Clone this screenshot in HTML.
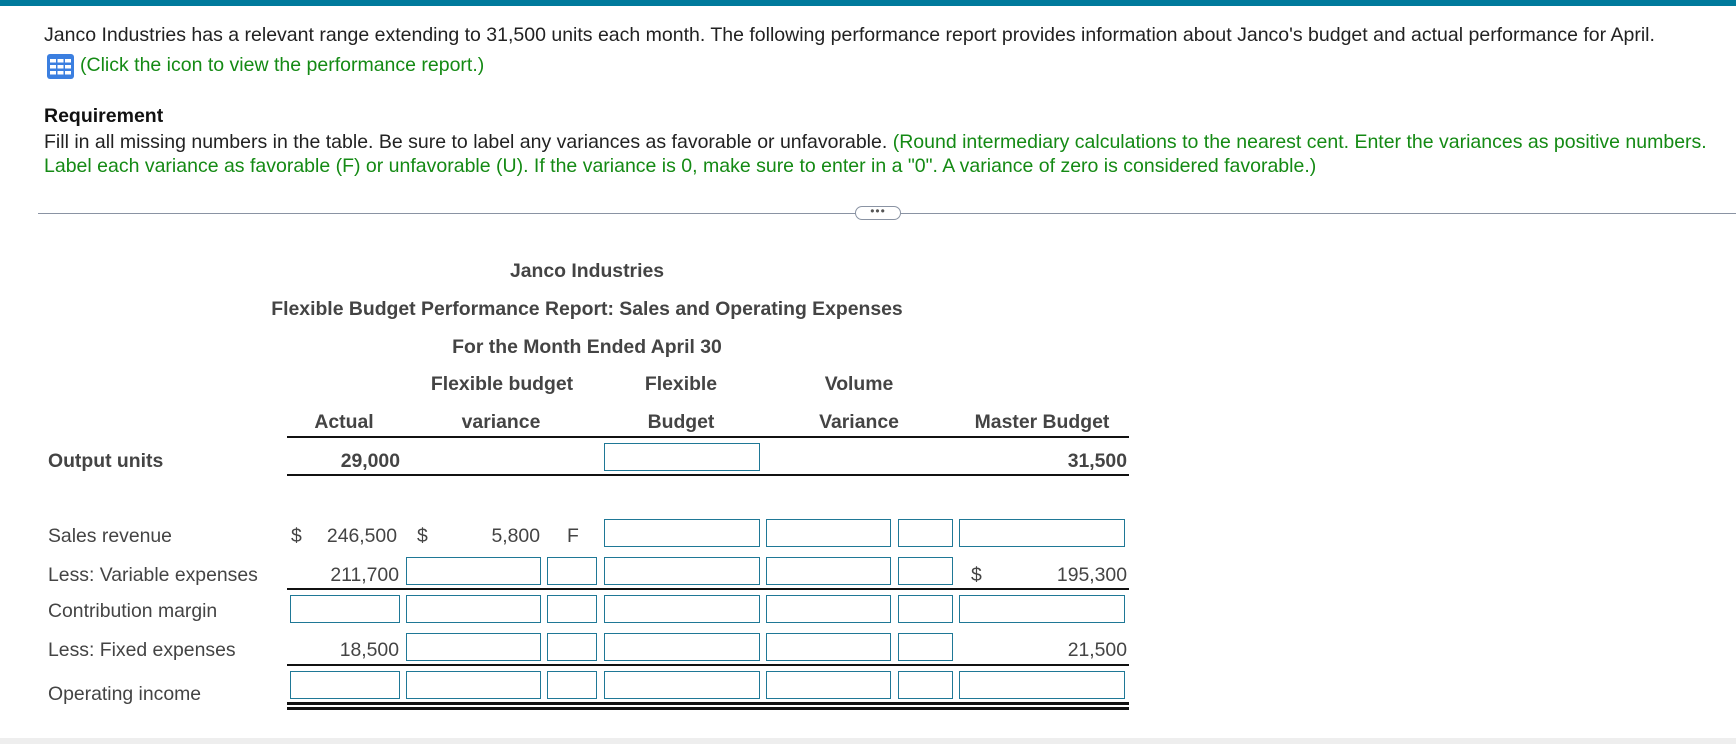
<!DOCTYPE html>
<html><head><meta charset="utf-8"><style>
body{margin:0;width:1736px;height:744px;position:relative;overflow:hidden;background:#fff;font-family:"Liberation Sans",Arial,sans-serif;color:#222;}
.a{position:absolute;white-space:nowrap;line-height:1;}
.g{color:#148a14;}
.b{font-weight:bold;color:#333;}
.c{transform:translateX(-50%);}
.r{transform:translateX(-100%);}
.bx{position:absolute;border:1px solid #1f7896;background:#fff;box-sizing:border-box;}
.ln{position:absolute;left:287px;width:842px;height:2px;background:#111;}
.t{font-size:19.5px;}
.m{font-size:19.4px;color:#444;}
</style></head><body>
<div style="position:absolute;left:0;top:0;width:1736px;height:6px;background:#007a9c"></div>
<div style="position:absolute;left:0;top:738px;width:1736px;height:6px;background:#eeeeee"></div>

<div class="a t" style="left:44px;top:26px">Janco Industries has a relevant range extending to 31,500 units each month. The following performance report provides information about Janco's budget and actual performance for April.</div>
<svg style="position:absolute;left:47px;top:54px" width="27" height="25" viewBox="0 0 27 25"><rect x="0" y="0" width="27" height="25" rx="3" fill="#3b7fe0"/><g fill="#fff"><rect x="3" y="5" width="6" height="3.5"/><rect x="10.5" y="5" width="6" height="3.5"/><rect x="18" y="5" width="6" height="3.5"/><rect x="3" y="11" width="6" height="3.5"/><rect x="10.5" y="11" width="6" height="3.5"/><rect x="18" y="11" width="6" height="3.5"/><rect x="3" y="17" width="6" height="3.5"/><rect x="10.5" y="17" width="6" height="3.5"/><rect x="18" y="17" width="6" height="3.5"/></g></svg>
<div class="a t g" style="left:80px;top:56px">(Click the icon to view the performance report.)</div>

<div class="a t" style="left:44px;top:107px;font-weight:bold;color:#111">Requirement</div>
<div class="a t" style="left:44px;top:133px">Fill in all missing numbers in the table. Be sure to label any variances as favorable or unfavorable. <span class="g">(Round intermediary calculations to the nearest cent. Enter the variances as positive numbers.</span></div>
<div class="a t g" style="left:44px;top:157px">Label each variance as favorable (F) or unfavorable (U). If the variance is 0, make sure to enter in a "0". A variance of zero is considered favorable.)</div>

<div style="position:absolute;left:38px;top:213px;width:1698px;height:1px;background:#8a93a3"></div>
<div style="position:absolute;left:855px;top:206px;width:46px;height:14px;border:1px solid #8a93a3;border-radius:8px;background:#fff;box-sizing:border-box;text-align:center;font-size:12px;line-height:8px;color:#555;letter-spacing:1px">•••</div>

<div class="a m b c" style="left:587px;top:262px">Janco Industries</div>
<div class="a m b c" style="left:587px;top:300px">Flexible Budget Performance Report: Sales and Operating Expenses</div>
<div class="a m b c" style="left:587px;top:338px">For the Month Ended April 30</div>
<div class="a m b c" style="left:502px;top:375px">Flexible budget</div>
<div class="a m b c" style="left:681px;top:375px">Flexible</div>
<div class="a m b c" style="left:859px;top:375px">Volume</div>
<div class="a m b c" style="left:344px;top:413px">Actual</div>
<div class="a m b c" style="left:501px;top:413px">variance</div>
<div class="a m b c" style="left:681px;top:413px">Budget</div>
<div class="a m b c" style="left:859px;top:413px">Variance</div>
<div class="a m b c" style="left:1042px;top:413px">Master Budget</div>

<div class="ln" style="top:436px"></div>
<div class="a m b" style="left:48px;top:452px">Output units</div>
<div class="a m b r" style="left:400px;top:452px">29,000</div>
<div class="bx" style="left:604px;top:443px;width:156px;height:28px"></div>
<div class="a m b r" style="left:1127px;top:452px">31,500</div>
<div class="ln" style="top:474px"></div>

<div class="a m" style="left:48px;top:527px">Sales revenue</div>
<div class="a m" style="left:291px;top:527px">$</div>
<div class="a m r" style="left:397px;top:527px">246,500</div>
<div class="a m" style="left:417px;top:527px">$</div>
<div class="a m r" style="left:540px;top:527px">5,800</div>
<div class="a m" style="left:567px;top:527px">F</div>

<div class="a m" style="left:48px;top:566px">Less: Variable expenses</div>
<div class="a m r" style="left:399px;top:566px">211,700</div>
<div class="a m" style="left:971px;top:566px">$</div>
<div class="a m r" style="left:1127px;top:566px">195,300</div>
<div class="ln" style="top:588px"></div>

<div class="a m" style="left:48px;top:602px">Contribution margin</div>
<div class="a m" style="left:48px;top:641px">Less: Fixed expenses</div>
<div class="a m r" style="left:399px;top:641px">18,500</div>
<div class="a m r" style="left:1127px;top:641px">21,500</div>
<div class="ln" style="top:664px"></div>
<div class="a m" style="left:48px;top:685px">Operating income</div>
<div class="ln" style="top:702px;height:3px"></div>
<div class="ln" style="top:707px;height:3px"></div>

<div class="bx" style="left:604px;top:519px;width:156px;height:28px"></div>
<div class="bx" style="left:766px;top:519px;width:125px;height:28px"></div>
<div class="bx" style="left:898px;top:519px;width:55px;height:28px"></div>
<div class="bx" style="left:959px;top:519px;width:166px;height:28px"></div>

<div class="bx" style="left:406px;top:557px;width:135px;height:28px"></div>
<div class="bx" style="left:547px;top:557px;width:50px;height:28px"></div>
<div class="bx" style="left:604px;top:557px;width:156px;height:28px"></div>
<div class="bx" style="left:766px;top:557px;width:125px;height:28px"></div>
<div class="bx" style="left:898px;top:557px;width:55px;height:28px"></div>

<div class="bx" style="left:290px;top:595px;width:110px;height:28px"></div>
<div class="bx" style="left:406px;top:595px;width:135px;height:28px"></div>
<div class="bx" style="left:547px;top:595px;width:50px;height:28px"></div>
<div class="bx" style="left:604px;top:595px;width:156px;height:28px"></div>
<div class="bx" style="left:766px;top:595px;width:125px;height:28px"></div>
<div class="bx" style="left:898px;top:595px;width:55px;height:28px"></div>
<div class="bx" style="left:959px;top:595px;width:166px;height:28px"></div>

<div class="bx" style="left:406px;top:633px;width:135px;height:28px"></div>
<div class="bx" style="left:547px;top:633px;width:50px;height:28px"></div>
<div class="bx" style="left:604px;top:633px;width:156px;height:28px"></div>
<div class="bx" style="left:766px;top:633px;width:125px;height:28px"></div>
<div class="bx" style="left:898px;top:633px;width:55px;height:28px"></div>

<div class="bx" style="left:290px;top:671px;width:110px;height:28px"></div>
<div class="bx" style="left:406px;top:671px;width:135px;height:28px"></div>
<div class="bx" style="left:547px;top:671px;width:50px;height:28px"></div>
<div class="bx" style="left:604px;top:671px;width:156px;height:28px"></div>
<div class="bx" style="left:766px;top:671px;width:125px;height:28px"></div>
<div class="bx" style="left:898px;top:671px;width:55px;height:28px"></div>
<div class="bx" style="left:959px;top:671px;width:166px;height:28px"></div>
</body></html>
